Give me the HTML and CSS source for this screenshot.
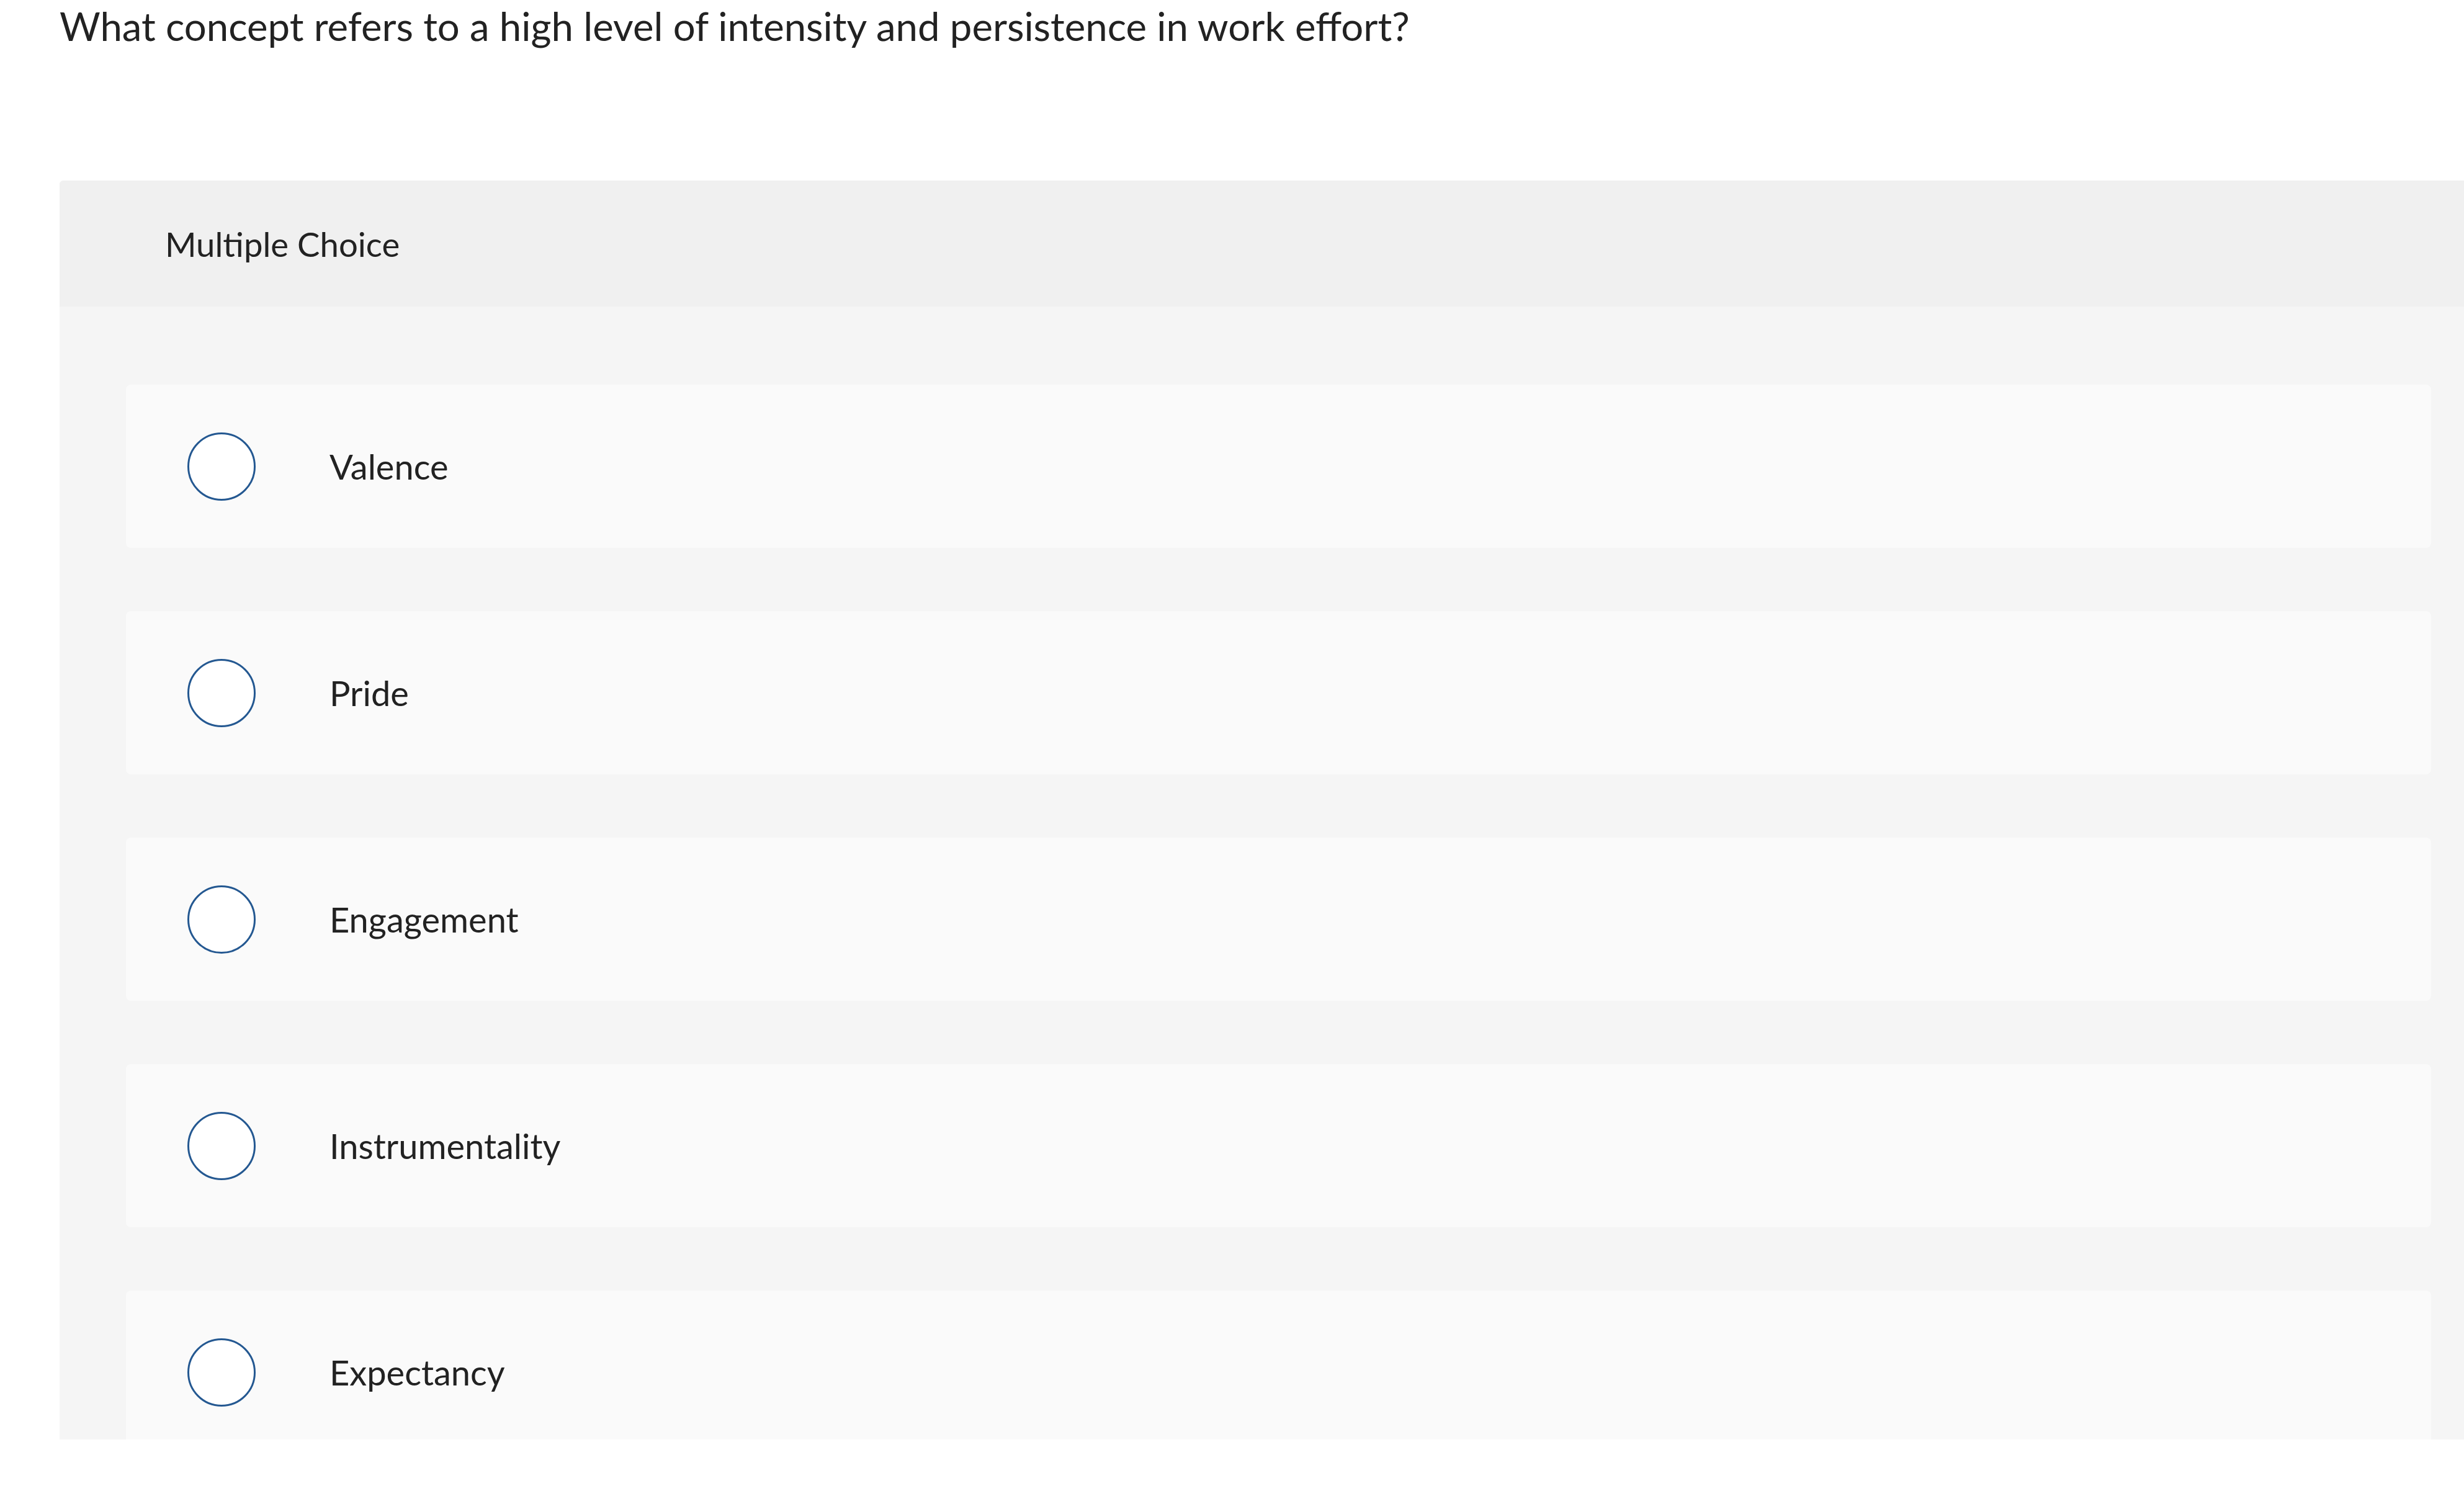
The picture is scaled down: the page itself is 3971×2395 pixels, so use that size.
FILE: index.html
```html
<!DOCTYPE html>
<html lang="en">
<head>
<meta charset="utf-8">
<title>Multiple Choice</title>
<link rel="stylesheet" href="styles.css">
</head>
<body>
<div class="page">
  <h1 class="question">What concept refers to a high level of intensity and persistence in work effort?</h1>
  <section class="panel">
    <header class="panel-header">Multiple Choice</header>
    <div class="panel-body">
      <label class="option"><span class="radio"></span><span class="option-text">Valence</span></label>
      <label class="option"><span class="radio"></span><span class="option-text">Pride</span></label>
      <label class="option"><span class="radio"></span><span class="option-text">Engagement</span></label>
      <label class="option"><span class="radio"></span><span class="option-text">Instrumentality</span></label>
      <label class="option"><span class="radio"></span><span class="option-text">Expectancy</span></label>
    </div>
  </section>
</div>
</body>
</html>
```
FILE: styles.css
```css
html, body {
  margin: 0;
  padding: 0;
  background: #ffffff;
}
body {
  font-family: Lato, "Liberation Sans", sans-serif;
  color: #222222;
  overflow: hidden;
}
.page {
  width: 3971px;
  height: 2395px;
  overflow: hidden;
}
.question {
  margin: 0;
  padding: 0 0 0 96px;
  height: 84px;
  line-height: 84px;
  font-size: 63.5px;
  font-weight: 400;
  color: #222222;
}
.panel {
  margin: 207px 0 0 96px;
  height: 2029px;
  overflow: hidden;
  background: #f5f5f5;
  border-top-left-radius: 6px;
}
.panel-header {
  height: 203px;
  display: flex;
  align-items: center;
  padding-left: 170px;
  background: #f0f0f0;
  font-size: 54.5px;
  color: #222222;
}
.panel-body {
  display: flex;
  flex-direction: column;
  gap: 102px;
  padding: 126px 53px 0 107px;
}
.option {
  flex: none;
  height: 263px;
  display: flex;
  align-items: center;
  padding-left: 99px;
  background: #fafafa;
  border-radius: 8px;
}
.radio {
  flex: none;
  width: 104px;
  height: 104px;
  border: 3.5px solid #245891;
  border-radius: 50%;
  background: #ffffff;
}
.option-text {
  margin-left: 119px;
  font-size: 56px;
  color: #222222;
}
```
